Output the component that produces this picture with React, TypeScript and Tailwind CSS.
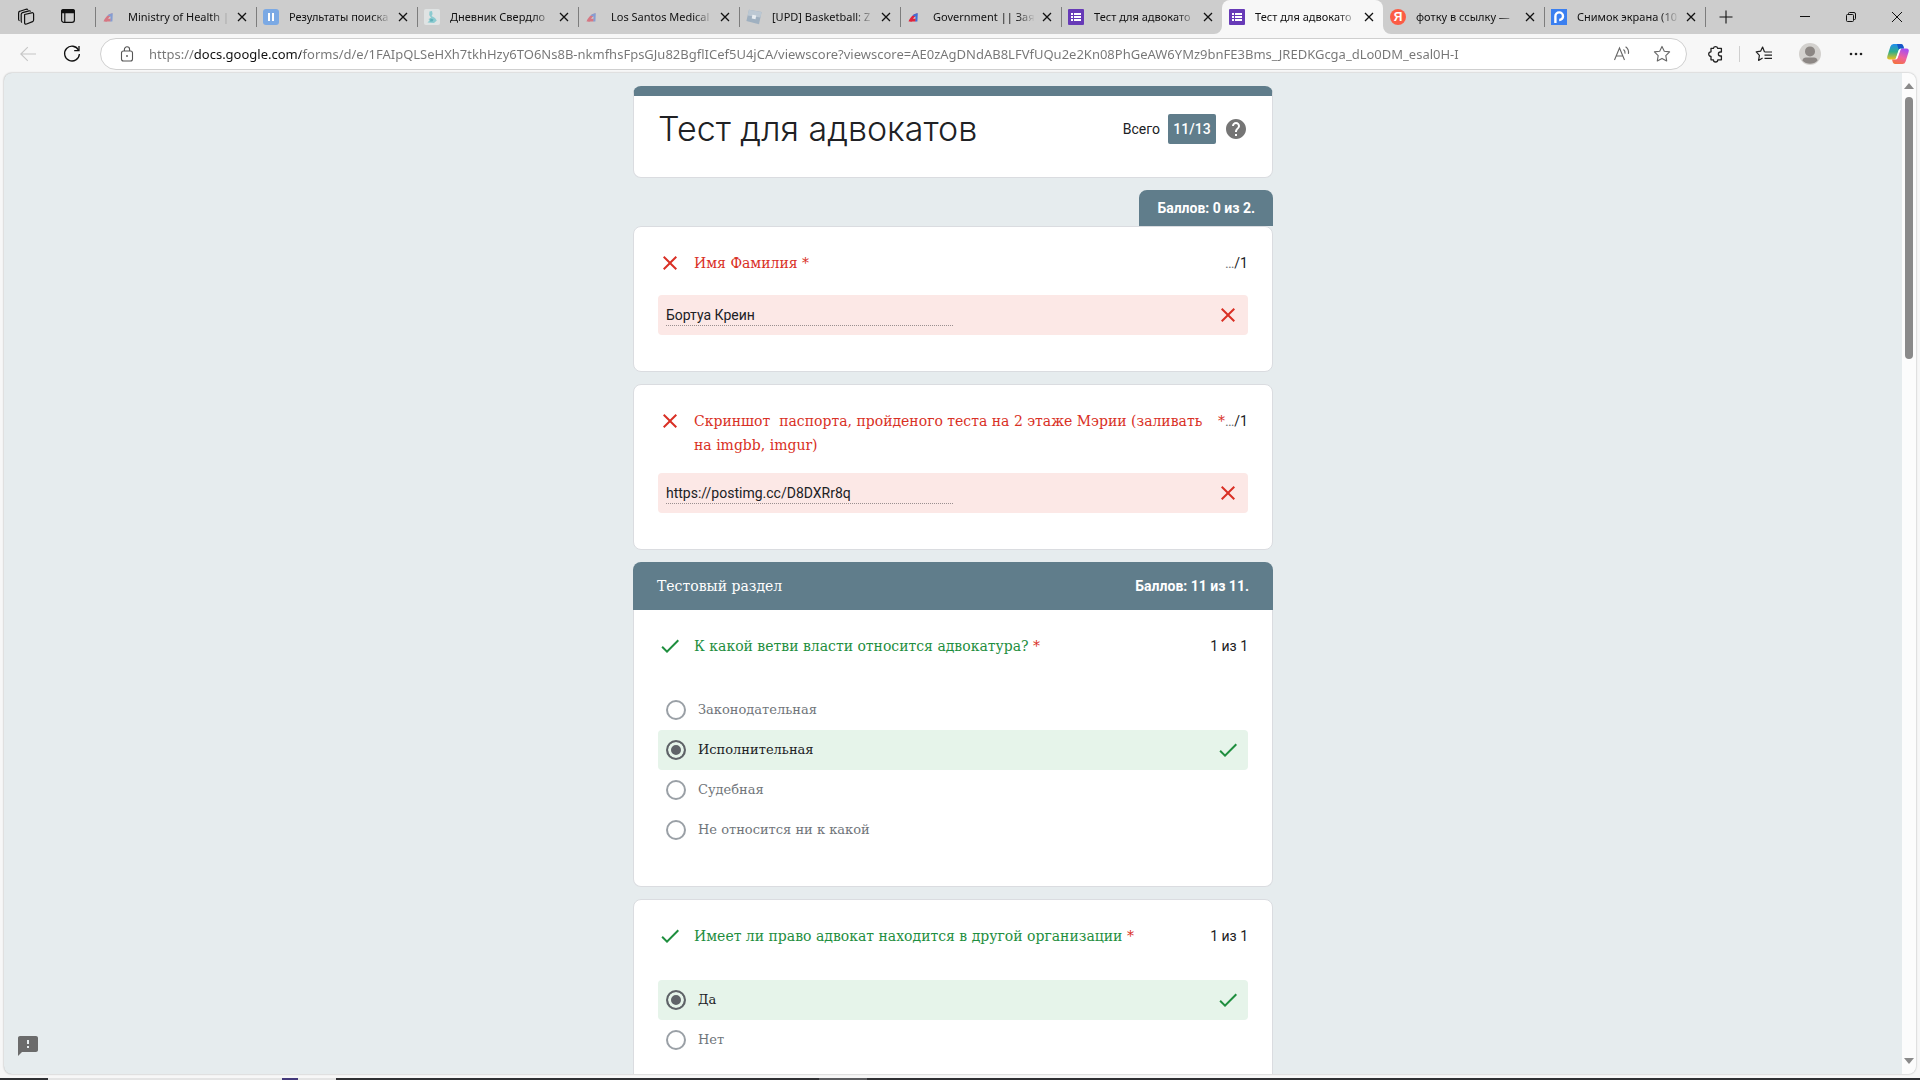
import { useState, type ReactNode } from "react";

interface TabItem {
  id: number;
  title: string;
  icon: ReactNode;
  active?: boolean;
}

interface ChoiceQuestion {
  id: string;
  title: string;
  options: string[];
  answer: string;
}

const PAGE_URL =
  "https://docs.google.com/forms/d/e/1FAIpQLSeHXh7tkhHzy6TO6Ns8B-nkmfhsFpsGJu82BgflICef5U4jCA/viewscore?viewscore=AE0zAgDNdAB8LFVfUQu2e2Kn08PhGeAW6YMz9bnFE3Bms_JREDKGcga_dLo0DM_esal0H-I";

const questions: ChoiceQuestion[] = [
  {
    id: "branch",
    title: "К какой ветви власти относится адвокатура?",
    options: [
      "Законодательная",
      "Исполнительная",
      "Судебная",
      "Не относится ни к какой",
    ],
    answer: "Исполнительная",
  },
  {
    id: "membership",
    title: "Имеет ли право адвокат находится в другой организации",
    options: ["Да", "Нет"],
    answer: "Да",
  },
];

/* Favicons */

function ArcIcon({ faded }: { faded?: boolean }) {
  return (
    <svg viewBox="0 0 16 16" className={faded ? "size-4 opacity-50" : "size-4"}>
      <path d="M1.5 12.5 C3 8.5 6 5 10.5 4.2 L9.5 6.8 C7.5 7.4 5.8 9.6 5 12.5Z" fill="#e0243c" />
      <path d="M5.5 6.4 C7 5 8.6 4.4 10.8 4.2 L10.4 12.5 H8 L8.6 7.4Z" fill="#3f6fd8" />
      <path d="M3 12.5 L5.4 9.8 L8.6 9.8 L8.2 12.5Z" fill="#e0243c" />
    </svg>
  );
}

function PauseIcon() {
  return (
    <svg viewBox="0 0 16 16" className="size-4">
      <rect width="16" height="16" rx="3" fill="#7ba9e4" />
      <rect x="5" y="4" width="2" height="8" fill="#fff" />
      <rect x="9" y="4" width="2" height="8" fill="#fff" />
    </svg>
  );
}

function DiaryIcon() {
  return (
    <svg viewBox="0 0 16 16" className="size-4">
      <rect width="16" height="16" rx="2" fill="#dfe3e3" />
      <path d="M5.5 2.5 L8 2 L8.6 5 L7.6 7 L11 9 L12.8 11.5 L10 14 L3.5 13.5 L5.5 11.6 L4.5 10 L7 8.8 L5.2 6Z" fill="#8ccbd0" />
      <path d="M6.5 9.5 L9.5 10.5 L8.5 12.5 L6 12.4Z" fill="#5fb1ba" />
    </svg>
  );
}

function RobloxIcon() {
  return (
    <svg viewBox="0 0 16 16" className="size-4">
      <path d="M3 0.8 L15.6 3 L13 15.2 L0.4 12Z" fill="#9fb0c0" />
      <path d="M3 0.8 L15.6 3 L14.4 8.6 L1.6 6.6Z" fill="#bcc8d3" />
      <path d="M6.4 5.8 L10.2 6.6 L9.5 10.2 L5.7 9.4Z" fill="#e8edf1" />
    </svg>
  );
}

function FormsIcon() {
  return (
    <svg viewBox="0 0 16 16" className="size-4">
      <rect width="16" height="16" rx="1" fill="#673ab7" />
      <path d="M3 4h2v2H3zM6 4h7v2H6zM3 7h2v2H3zM6 7h7v2H6zM3 10h2v2H3zM6 10h7v2H6z" fill="#fff" />
    </svg>
  );
}

function YandexIcon() {
  return (
    <span className="flex size-4 items-center justify-center rounded-full bg-[#fc5c45] font-['Liberation_Sans',sans-serif] text-xs leading-none font-bold text-white">
      Я
    </span>
  );
}

function PostimgIcon() {
  return (
    <svg viewBox="0 0 16 16" className="size-4">
      <rect width="16" height="16" fill="#3a7ff0" />
      <path d="M4.4 14 V7.2 a3.8 3.8 0 1 1 3.8 3.8" fill="none" stroke="#fff" strokeWidth="2.4" />
    </svg>
  );
}

const tabs: TabItem[] = [
  { id: 1, title: "Ministry of Health |", icon: <ArcIcon faded /> },
  { id: 2, title: "Результаты поиска", icon: <PauseIcon /> },
  { id: 3, title: "Дневник Свердло", icon: <DiaryIcon /> },
  { id: 4, title: "Los Santos Medical", icon: <ArcIcon faded /> },
  { id: 5, title: "[UPD] Basketball: Z", icon: <RobloxIcon /> },
  { id: 6, title: "Government || Заяв", icon: <ArcIcon /> },
  { id: 7, title: "Тест для адвокато", icon: <FormsIcon /> },
  { id: 8, title: "Тест для адвокато", icon: <FormsIcon />, active: true },
  { id: 9, title: "фотку в ссылку —", icon: <YandexIcon /> },
  { id: 10, title: "Снимок экрана (10", icon: <PostimgIcon /> },
];

/* Browser chrome */

function BrowserTab({ tab, divider }: { tab: TabItem; divider: boolean }) {
  return (
    <div
      className={
        tab.active
          ? "relative flex h-full w-[161px] min-w-0 items-center rounded-t-lg bg-[#f7f7f7] pr-1"
          : "relative flex h-full w-[161px] min-w-0 items-center pr-1"
      }
    >
      {tab.active && (
        <>
          <svg viewBox="0 0 8 8" className="absolute bottom-0 -left-2 size-2" fill="#f7f7f7">
            <path d="M8 0 A8 8 0 0 1 0 8 H8Z" />
          </svg>
          <svg viewBox="0 0 8 8" className="absolute -right-2 bottom-0 size-2" fill="#f7f7f7">
            <path d="M0 0 A8 8 0 0 0 8 8 H0Z" />
          </svg>
        </>
      )}
      <span className={divider ? "h-5 w-px shrink-0 bg-[#7d7d7d]" : "h-5 w-px shrink-0"} />
      <button className="flex min-w-0 flex-1 items-center gap-2.5 pl-1.5 text-left">
        <span className="shrink-0">{tab.icon}</span>
        <span className="min-w-0 flex-1 text-[11px] leading-4 whitespace-nowrap text-[#111] [mask-image:linear-gradient(to_right,black_82%,transparent)]">
          {tab.title}
        </span>
      </button>
      <button aria-label="Закрыть вкладку" className="ml-0.5 flex size-5 shrink-0 items-center justify-center">
        <svg viewBox="0 0 10 10" className="size-2.5" stroke="#111" strokeWidth="1.3">
          <path d="M1 1 L9 9 M9 1 L1 9" />
        </svg>
      </button>
    </div>
  );
}

function TabStrip() {
  return (
    <header className="flex h-[34px] shrink-0 items-center bg-[#cdcdcd]">
      <div className="flex shrink-0 pr-1.5 pl-[5px]">
        <button aria-label="Рабочие области" className="flex w-[42px] justify-center">
          <svg viewBox="0 0 18 18" className="size-[18px]" fill="none" stroke="#111" strokeWidth="1.2" strokeLinejoin="round">
            <path d="M7 6.5 L14 4.8 Q16 4.4 16 6 V12 Q16 13.2 15 13.6 L9 16 Q7 16.5 7 15Z" transform="translate(0.6 0)" />
            <path d="M5 14.5 Q4.2 14.2 4.2 13 V6.5 Q4.2 5 5.5 4.6 L12 2.8 Q13.2 2.6 13.6 3.6" />
            <path d="M2.6 12.8 Q1.6 12.4 1.6 11.2 V5 Q1.6 3.6 3 3.2 L9 1.3 Q10.4 1 10.9 1.8" />
          </svg>
        </button>
        <button aria-label="Вертикальные вкладки" className="flex w-[42px] justify-center">
          <svg viewBox="0 0 16 16" className="size-4" fill="none" stroke="#111" strokeWidth="1.2">
            <rect x="1.6" y="1.6" width="12.8" height="12.8" rx="2.4" />
            <path d="M1.6 3.4 Q1.6 1.6 3.6 1.6 H12.4 Q14.4 1.6 14.4 3.4 V4.6 H1.6Z" fill="#111" />
            <path d="M4.8 5 V14.4" />
          </svg>
        </button>
      </div>
      <nav className="flex h-full min-w-0" aria-label="Вкладки">
        {tabs.map((tab, i) => (
          <BrowserTab key={tab.id} tab={tab} divider={!tab.active && !tabs[i - 1]?.active} />
        ))}
      </nav>
      <span className="h-5 w-px shrink-0 bg-[#7d7d7d]" />
      <button aria-label="Новая вкладка" className="flex w-10 shrink-0 justify-center">
        <svg viewBox="0 0 14 14" className="size-3.5" stroke="#111" strokeWidth="1.1">
          <path d="M7 0.5 V13.5 M0.5 7 H13.5" />
        </svg>
      </button>
      <div className="ml-auto flex shrink-0">
        <button aria-label="Свернуть" className="flex h-[34px] w-[46px] items-center justify-center">
          <svg viewBox="0 0 10 10" className="size-2.5" stroke="#111">
            <path d="M0 4.5 H10" />
          </svg>
        </button>
        <button aria-label="Восстановить" className="flex h-[34px] w-[46px] items-center justify-center">
          <svg viewBox="0 0 10 10" className="size-2.5" fill="none" stroke="#111">
            <rect x="0.5" y="2.5" width="7" height="7" rx="1" />
            <path d="M2.5 2.5 V1.5 Q2.5 0.5 3.5 0.5 H8 Q9.5 0.5 9.5 2 V6.5 Q9.5 7.5 8.5 7.5 H7.5" />
          </svg>
        </button>
        <button aria-label="Закрыть" className="flex h-[34px] w-[46px] items-center justify-center">
          <svg viewBox="0 0 10 10" className="size-2.5" stroke="#111">
            <path d="M0 0 L10 10 M10 0 L0 10" />
          </svg>
        </button>
      </div>
    </header>
  );
}

function CopilotIcon() {
  return (
    <svg viewBox="0 0 24 24" className="size-6">
      <defs>
        <linearGradient id="cpA" x1="0" y1="0" x2="0" y2="1">
          <stop offset="0" stopColor="#1f8df0" />
          <stop offset="0.5" stopColor="#2fae8a" />
          <stop offset="1" stopColor="#f4c21a" />
        </linearGradient>
        <linearGradient id="cpB" x1="0.6" y1="0" x2="0.2" y2="1">
          <stop offset="0" stopColor="#a84df0" />
          <stop offset="0.5" stopColor="#f0609e" />
          <stop offset="1" stopColor="#f4743a" />
        </linearGradient>
      </defs>
      <path d="M7.5 2 H15 Q16.6 2 17.2 3.8 L18 6.5 H15 Q13 6.5 12.3 8.8 L10 16 Q9.4 17.6 7.8 17.6 H3.6 Q0.4 17.6 1.4 14 L4.4 4.6 Q5.2 2 7.5 2Z" fill="url(#cpA)" />
      <path d="M11 2 H15 Q16.6 2 17.2 3.8 L18 6.5 H15 Q13 6.5 12.6 7.6Z" fill="#1656c8" />
      <path d="M16.5 22 H9 Q7.4 22 6.8 20.2 L6 17.5 H9 Q11 17.5 11.7 15.2 L14 8 Q14.6 6.4 16.2 6.4 H20.4 Q23.6 6.4 22.6 10 L19.6 19.4 Q18.8 22 16.5 22Z" fill="url(#cpB)" />
      <path d="M13 8.2 Q13.6 6.6 15 6.5 L11.4 16.4 Q10.6 17.5 9.6 17.5Z" fill="#fff" />
    </svg>
  );
}

function Toolbar() {
  const [url, setUrl] = useState(PAGE_URL);

  return (
    <div className="flex h-[39px] shrink-0 items-center bg-[#f7f7f7] pr-1">
      <button aria-label="Назад" className="ml-2 flex w-10 shrink-0 justify-center">
        <svg viewBox="0 0 16 16" className="size-4" fill="none" stroke="#c6c6c6" strokeWidth="1.1">
          <path d="M16 8 H0.8 M7.8 1.2 L0.8 8 L7.8 14.8" />
        </svg>
      </button>
      <button aria-label="Обновить" className="ml-1 flex w-10 shrink-0 justify-center">
        <svg viewBox="0 0 18 18" className="size-[18px]" fill="none" stroke="#111" strokeWidth="1.3">
          <path d="M15.6 5.2 A7.4 7.4 0 1 0 16.4 9" />
          <path d="M16 1 V5.6 H11.2" />
        </svg>
      </button>
      <div className="ml-2 flex h-8 min-w-0 flex-1 items-center rounded-full border border-[#cfcfcf] bg-white pl-4">
        <button aria-label="Сведения о сайте" className="flex size-5 shrink-0 items-center justify-center">
          <svg viewBox="0 0 16 16" className="size-4" fill="none" stroke="#555" strokeWidth="1.1">
            <rect x="2.5" y="5" width="11" height="10" rx="2" />
            <path d="M5.4 5 V3.4 A2.6 2.6 0 0 1 10.6 3.4 V5" />
            <circle cx="8" cy="10" r="0.9" fill="#555" stroke="none" />
          </svg>
        </button>
        <input
          aria-label="Адресная строка"
          spellCheck={false}
          value={url}
          onChange={(e) => setUrl(e.target.value)}
          className="ml-3 min-w-0 flex-1 bg-[linear-gradient(90deg,#757575_45px,#111_45px,#111_152px,#757575_152px)] bg-clip-text text-[13px] leading-6 text-transparent caret-black outline-none"
        />
        <button aria-label="Прочесть вслух" className="flex w-10 shrink-0 justify-center">
          <svg viewBox="0 0 18 18" className="size-[18px]" fill="none" stroke="#666" strokeWidth="1.1">
            <path d="M1.5 15 L6.5 3 L11.5 15 M3.2 11 H9.8" />
            <path d="M10.5 4.5 Q12.4 6 12 8.6" />
            <path d="M12.6 1.8 Q16.2 4.4 15.4 8.8" />
          </svg>
        </button>
        <button aria-label="Добавить в избранное" className="mr-1 flex w-10 shrink-0 justify-center">
          <svg viewBox="0 0 18 18" className="size-[18px]" fill="none" stroke="#666" strokeWidth="1.1" strokeLinejoin="round">
            <path d="M9 1.4 L11.3 6.2 L16.6 6.9 L12.8 10.6 L13.7 15.9 L9 13.4 L4.3 15.9 L5.2 10.6 L1.4 6.9 L6.7 6.2Z" />
          </svg>
        </button>
      </div>
      <button aria-label="Расширения" className="ml-2 flex w-10 shrink-0 justify-center">
        <svg viewBox="0 0 18 18" className="size-[18px]" fill="none" stroke="#222" strokeWidth="1.3" strokeLinejoin="round">
          <path d="M5 3.4 H7.4 A2.2 2.2 0 0 1 11.7 3.4 H15.4 V7 H14.4 A2 2 0 0 0 14.4 11 H15.4 V14.8 H11.8 A2.2 2.2 0 0 1 7.4 14.8 H5 V11.4 A2.3 2.3 0 0 1 5 6.8Z" />
        </svg>
      </button>
      <span className="mx-1 h-4 w-px shrink-0 bg-[#cfcfcf]" />
      <button aria-label="Избранное" className="flex w-10 shrink-0 justify-center">
        <svg viewBox="0 0 18 18" className="size-[18px]" fill="none" stroke="#222" strokeWidth="1.2" strokeLinejoin="round">
          <path d="M9.5 7 L7.6 2 L5.6 6.2 L1.2 6.9 L4.4 10.4 L3.6 15.4 L7.6 13" />
          <path d="M9.5 7 H17 M9.5 10.2 H17 M9.5 13.4 H17" />
        </svg>
      </button>
      <button aria-label="Профиль" className="mr-0.5 ml-1.5 flex w-10 shrink-0 justify-center">
        <svg viewBox="0 0 22 22" className="size-[22px]">
          <circle cx="11" cy="11" r="11" fill="#d3d1ce" />
          <circle cx="11" cy="8.4" r="5" fill="#8c8784" />
          <path d="M3.4 17.6 Q4 14.6 7 14.6 H15 Q18 14.6 18.6 17.6 A10.6 10.6 0 0 1 3.4 17.6Z" fill="#8c8784" />
        </svg>
      </button>
      <button aria-label="Параметры" className="flex w-12 shrink-0 justify-center">
        <svg viewBox="0 0 14 4" className="h-1 w-3.5" fill="#222">
          <circle cx="2" cy="2" r="1.3" />
          <circle cx="7" cy="2" r="1.3" />
          <circle cx="12" cy="2" r="1.3" />
        </svg>
      </button>
      <button aria-label="Copilot" className="flex w-9 shrink-0 justify-center">
        <CopilotIcon />
      </button>
    </div>
  );
}

/* Form */

function WrongIcon() {
  return (
    <svg viewBox="0 0 24 24" className="size-6 shrink-0" fill="#d93025">
      <path d="M19 6.41L17.59 5 12 10.59 6.41 5 5 6.41 10.59 12 5 17.59 6.41 19 12 13.41 17.59 19 19 17.59 13.41 12z" />
    </svg>
  );
}

function CorrectIcon() {
  return (
    <svg viewBox="0 0 24 24" className="size-6 shrink-0" fill="#1e8e3e">
      <path d="M9 16.17L4.83 12l-1.42 1.41L9 19 21 7l-1.41-1.41z" />
    </svg>
  );
}

function TextCard({ id, title, value, wide }: { id: string; title: string; value: string; wide?: boolean }) {
  return (
    <section className="rounded-lg border border-[#dadce0] bg-white px-6 pt-6 pb-9">
      <div className="flex min-h-7 items-start">
        <WrongIcon />
        <label
          htmlFor={id}
          className="ml-3 flex-1 font-['DejaVu_Serif',serif] text-sm leading-6 whitespace-pre-wrap text-[#d93025]"
        >
          {title}
          {!wide && " *"}
        </label>
        {wide && (
          <span className="ml-3 font-['DejaVu_Serif',serif] text-sm leading-6 text-[#d93025]">*</span>
        )}
        <span className="text-sm leading-6 text-[#202124]">
          <span className="text-[#70757a]">…</span>/1
        </span>
      </div>
      <div className="mt-4 flex h-10 items-center justify-between rounded bg-[#fce8e6] px-2">
        <input
          id={id}
          readOnly
          value={value}
          className="w-1/2 border-b border-dotted border-[#9a8f90] text-sm leading-5 text-[#202124] outline-none"
        />
        <WrongIcon />
      </div>
    </section>
  );
}

function ChoiceCard({ question, attached }: { question: ChoiceQuestion; attached?: boolean }) {
  const [selected, setSelected] = useState(question.answer);

  return (
    <section
      className={
        attached
          ? "rounded-b-lg border border-t-0 border-[#dadce0] bg-white px-6 pt-6 pb-9"
          : "rounded-lg border border-[#dadce0] bg-white px-6 pt-6 pb-9"
      }
    >
      <div className="flex min-h-7 items-start">
        <CorrectIcon />
        <h2 className="ml-3 flex-1 font-['DejaVu_Serif',serif] text-sm leading-6 text-[#1e8e3e]">
          {question.title} <span className="text-[#d93025]">*</span>
        </h2>
        <span className="text-sm leading-6 text-[#202124]">1 из 1</span>
      </div>
      <div className="mt-7">
        {question.options.map((option) => (
          <label
            key={option}
            className={
              option === question.answer
                ? "flex h-10 items-center gap-3 rounded bg-[#e6f4ea] px-2 text-[#202124]"
                : "flex h-10 items-center gap-3 rounded px-2 text-[#70757a]"
            }
          >
            <input
              type="radio"
              name={question.id}
              checked={selected === option}
              onChange={() => setSelected(option)}
              className="size-5 shrink-0 appearance-none rounded-full border-2 border-[#9aa0a6] checked:border-[#5f6368] checked:bg-[#5f6368] checked:shadow-[inset_0_0_0_3px_#e6f4ea]"
            />
            <span className="flex-1 font-['DejaVu_Serif',serif] text-[13px] leading-5">{option}</span>
            {option === question.answer && <CorrectIcon />}
          </label>
        ))}
      </div>
    </section>
  );
}

export default function App() {
  return (
    <div className="flex h-screen flex-col overflow-hidden bg-[#f7f7f7] font-['Noto_Sans',sans-serif]">
      <TabStrip />
      <Toolbar />

      {/* Page viewport */}
      <div className="relative mx-1 flex min-h-0 flex-1 overflow-hidden rounded-lg bg-[#e6ecee] shadow-[0_0_2px_rgba(0,0,0,0.35)]">
        <main className="flex min-w-0 flex-1 justify-center overflow-hidden pt-[13px] font-['Roboto',sans-serif]">
          <div className="w-full max-w-[640px]">
            <div className="mb-3 rounded-lg border border-t-[10px] border-[#dadce0] border-t-[#607d8b] bg-white px-6 pt-4 pb-8">
              <div className="flex items-center">
                <h1 className="flex-1 font-['Inter',sans-serif] text-[34px] leading-[33px] font-light text-[#202124]">
                  Тест для адвокатов
                </h1>
                <span className="text-sm text-[#202124]">Всего</span>
                <span className="ml-2 flex h-[30px] w-12 items-center justify-center rounded-xs bg-[#607d8b] text-sm font-medium text-white">
                  11/13
                </span>
                <button aria-label="Справка" className="ml-2">
                  <svg viewBox="0 0 24 24" className="size-6" fill="#757575">
                    <path d="M12 2C6.48 2 2 6.48 2 12s4.48 10 10 10 10-4.48 10-10S17.52 2 12 2zm1 17h-2v-2h2v2zm2.07-7.75l-.9.92C13.45 12.9 13 13.5 13 15h-2v-.5c0-1.1.45-2.1 1.17-2.83l1.24-1.26c.37-.36.59-.86.59-1.41 0-1.1-.9-2-2-2s-2 .9-2 2H8c0-2.21 1.79-4 4-4s4 1.79 4 4c0 .88-.36 1.68-.93 2.25z" />
                  </svg>
                </button>
              </div>
            </div>

            <div className="flex justify-end">
              <div className="rounded-t-lg bg-[#607d8b] px-[18px] py-2 text-sm leading-5 font-bold text-white">
                Баллов: 0 из 2.
              </div>
            </div>
            <div className="mb-3 flex flex-col gap-3">
              <TextCard id="name" title="Имя Фамилия" value="Бортуа Креин" />
              <TextCard
                id="passport"
                title={"Скриншот  паспорта, пройденого теста на 2 этаже Мэрии (заливать на imgbb, imgur)"}
                value="https://postimg.cc/D8DXRr8q"
                wide
              />
            </div>

            <div className="flex h-12 items-center justify-between rounded-t-lg bg-[#607d8b] px-6 text-white">
              <h2 className="font-['DejaVu_Serif',serif] text-sm leading-6">Тестовый раздел</h2>
              <span className="text-sm font-bold">Баллов: 11 из 11.</span>
            </div>
            <div className="flex flex-col gap-3">
              {questions.map((question, i) => (
                <ChoiceCard key={question.id} question={question} attached={i === 0} />
              ))}
            </div>
          </div>
        </main>

        {/* Scrollbar */}
        <div className="flex w-[14px] shrink-0 flex-col items-center bg-[#fcfcfc] py-2.5">
          <svg viewBox="0 0 10 6" className="h-1.5 w-2.5" fill="#8a8a8a">
            <path d="M0 6 L5 0 L10 6Z" />
          </svg>
          <div className="mt-2 h-[262px] w-2 rounded-full bg-[#8a8a8a]" />
          <svg viewBox="0 0 10 6" className="mt-auto h-1.5 w-2.5" fill="#8a8a8a">
            <path d="M0 0 L5 6 L10 0Z" />
          </svg>
        </div>

        <button aria-label="Сообщить о проблеме" className="absolute bottom-4 left-3">
          <svg viewBox="0 0 24 24" className="size-6" fill="#6b6b6b">
            <path d="M20 2H4c-1.1 0-1.99.9-1.99 2L2 22l4-4h14c1.1 0 2-.9 2-2V4c0-1.1-.9-2-2-2zm-7 12h-2v-2h2v2zm0-4h-2V6h2v4z" />
          </svg>
        </button>
      </div>

      {/* Top edge of the taskbar */}
      <div className="mt-1 flex h-0.5 shrink-0 bg-[#2f3033] pl-12">
        <div className="flex w-72 bg-[#e4e4e4]">
          <div className="ml-[234px] w-4 bg-[#43397a]" />
        </div>
        <div className="ml-[483px] w-12 bg-[#5c5d60]" />
      </div>
    </div>
  );
}
